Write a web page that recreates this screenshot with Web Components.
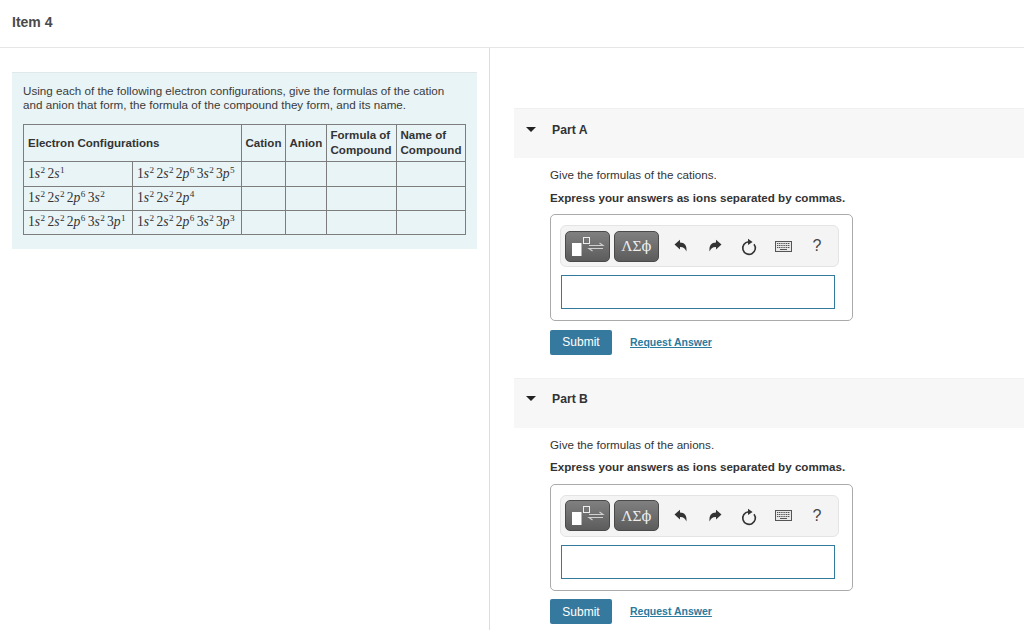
<!DOCTYPE html>
<html>
<head>
<meta charset="utf-8">
<title>Item 4</title>
<style>
	html, body {
		margin: 0;
		height: 630px;
		overflow: hidden;
		background: #fff;
		color: #333;
		font-family: "Liberation Sans", Arial, sans-serif;
	}
</style>
</head>
<body>
<item-page>
	<item-header slot="header">Item 4</item-header>
	<stem-panel slot="left">
		Using each of the following electron configurations, give the formulas of the cation and anion that form, the formula of the compound they form, and its name.
		<config-table slot="table"></config-table>
	</stem-panel>
	<answer-part slot="right" label="Part A" prompt="Give the formulas of the cations."></answer-part>
	<answer-part slot="right" label="Part B" prompt="Give the formulas of the anions."></answer-part>
</item-page>

<script>
class ItemPage extends HTMLElement {
	constructor() {
		super()
		this.attachShadow({mode:'open'})
		this.shadowRoot.innerHTML = /*html*/`
		<style>
			:host {
				display: block;
				height: 630px;
				overflow: hidden;
			}
			.columns {
				display: flex;
				height: 582px;
			}
			.left {
				box-sizing: border-box;
				border-right: solid 1px #ddd;
				flex: none;
				width: 490px;
				padding: 24px 12px 0;
			}
			.right {
				flex: 1;
				padding: 60px 0 0 24px;
				min-width: 0;
			}
		</style>
		<slot name="header"></slot>
		<div class="columns">
			<div class="left"><slot name="left"></slot></div>
			<div class="right"><slot name="right"></slot></div>
		</div>`
	}
}

class ItemHeader extends HTMLElement {
	constructor() {
		super()
		this.attachShadow({mode:'open'})
		this.shadowRoot.innerHTML = /*html*/`
		<style>
			:host {
				display: block;
				box-sizing: border-box;
				height: 48px;
				padding: 14px 0 0 12px;
				border-bottom: solid 1px #e6e6e6;
				font-size: 14px;
				line-height: 16px;
				font-weight: bold;
				color: #4a4a4a;
			}
		</style>
		<slot></slot>`
	}
}

class StemPanel extends HTMLElement {
	constructor() {
		super()
		this.attachShadow({mode:'open'})
		this.shadowRoot.innerHTML = /*html*/`
		<style>
			:host {
				display: block;
				box-sizing: border-box;
				width: 465px;
				height: 177px;
				padding: 10.5px 11px 0;
				background: #e9f4f7;
				border-top: solid 1px #e0e8ea;
				font-size: 11.65px;
				line-height: 14.5px;
				color: #3a3a3a;
			}
			.text {
				height: 40.5px;
				padding-right: 20px;
			}
		</style>
		<div class="text"><slot></slot></div>
		<slot name="table"></slot>`
	}
}

class ElectronConfig extends HTMLElement {
	constructor() {
		super()
		this.attachShadow({mode:'open'})
		let terms = this.getAttribute('value').split(' ').map(t => {
			let [, n, l, e] = t.match(/(\d)([a-z])(\d)/)
			return /*html*/`<span class="t">${n}<i>${l}</i><sup>${e}</sup></span>`
		}).join('')
		this.shadowRoot.innerHTML = /*html*/`
		<style>
			:host {
				display: inline-block;
				font-family: "Liberation Serif", "Times New Roman", serif;
				font-size: 13.6px;
				color: #333;
				white-space: nowrap;
			}
			.t {
				margin-right: 2.2px;
			}
			sup {
				font-size: 9.2px;
				line-height: 0;
				vertical-align: 4.8px;
				margin-left: .5px;
			}
		</style>
		${terms}`
	}
}

class ConfigTable extends HTMLElement {
	constructor() {
		super()
		this.attachShadow({mode:'open'})
		let rows = [
			['1s2 2s1', '1s2 2s2 2p6 3s2 3p5'],
			['1s2 2s2 2p6 3s2', '1s2 2s2 2p4'],
			['1s2 2s2 2p6 3s2 3p1', '1s2 2s2 2p6 3s2 3p3'],
		]
		this.shadowRoot.innerHTML = /*html*/`
		<style>
			:host {
				display: block;
			}
			table {
				border-collapse: collapse;
				table-layout: fixed;
				width: 442px;
				font-size: 11.55px;
				line-height: 14.6px;
				color: #333;
			}
			th, td {
				border: solid 1px #7d7d7d;
				padding: 0 4px;
				text-align: left;
				white-space: nowrap;
				overflow: hidden;
			}
			th + th {
				padding: 0 3px 0 3.5px;
			}
			.head { height: 37px; }
			.r1 { height: 25px; }
			.r2 { height: 24px; }
			.r3 { height: 24px; }
		</style>
		<table>
			<colgroup>
				<col style="width:109px"><col style="width:109px"><col style="width:44px">
				<col style="width:41px"><col style="width:70px"><col style="width:69px">
			</colgroup>
			<tr class="head">
				<th colspan="2">Electron Configurations</th>
				<th>Cation</th>
				<th>Anion</th>
				<th>Formula of<br>Compound</th>
				<th>Name of<br>Compound</th>
			</tr>
			${rows.map((r, i) => /*html*/`<tr class="r${i+1}">
				<td><electron-config value="${r[0]}"></electron-config></td>
				<td><electron-config value="${r[1]}"></electron-config></td>
				<td></td><td></td><td></td><td></td>
			</tr>`).join('')}
		</table>`
	}
}

class MathToolbar extends HTMLElement {
	constructor() {
		super()
		this.attachShadow({mode:'open'})
		this.shadowRoot.innerHTML = /*html*/`
		<style>
			:host {
				display: flex;
				align-items: center;
				box-sizing: border-box;
				width: 279px;
				height: 42px;
				padding: 0 4px;
				gap: 4px;
				background: #f4f4f4;
				border: solid 1px #e4e4e4;
				border-radius: 6px;
			}
			.btn {
				box-sizing: border-box;
				width: 45px;
				height: 31px;
				display: flex;
				align-items: center;
				justify-content: center;
				border: solid 1px #4a4a4a;
				border-radius: 5px;
				background: linear-gradient(#808080, #5c5c5c);
				color: #eee;
				font-family: "Liberation Serif", "Times New Roman", serif;
				font-size: 15.5px;
			}
			.btn .phi {
				font-family: "DejaVu Serif", serif;
				font-size: 14.5px;
			}
			.tools {
				display: flex;
				margin-left: 1.5px;
			}
			.tool {
				width: 34px;
				height: 30px;
				display: flex;
				align-items: center;
				justify-content: center;
				color: #444;
				font-size: 16px;
			}
			.reset svg {
				margin-top: 2px;
			}
		</style>
		<div class="btn">
			<svg width="43" height="29" viewBox="0 0 43 29">
				<rect x="6" y="11" width="9.5" height="13" fill="#fff"/>
				<rect x="17.5" y="5.5" width="6" height="6" fill="none" stroke="#eee"/>
				<path d="M23 13.5H37L33.5 11M37 16.5H23L26.5 19" fill="none" stroke="#d0d0d0" stroke-width="1.1"/>
			</svg>
		</div>
		<div class="btn"><span>ΛΣ<span class="phi">ϕ</span></span></div>
		<div class="tools">
			<div class="tool"><svg width="14" height="14" viewBox="0 0 14 14"><path d="M0.5 5.5 L6 0.8 V3.6 C10.5 3.6 13.2 6.5 12.4 12.6 C11.4 9.4 9.5 7.8 6 7.9 V10.5 Z" fill="#333"/></svg></div>
			<div class="tool"><svg width="14" height="14" viewBox="0 0 14 14"><path d="M13.5 5.5 L8 0.8 V3.6 C3.5 3.6 .8 6.5 1.6 12.6 C2.6 9.4 4.5 7.8 8 7.9 V10.5 Z" fill="#333"/></svg></div>
			<div class="tool reset"><svg width="16" height="18" viewBox="0 0 16 18"><path d="M13 6.2 A6.3 6.3 0 1 1 7.5 3.8" fill="none" stroke="#333" stroke-width="1.6"/><path d="M7 .8 L11.6 3.9 L7 7 Z" fill="#333"/></svg></div>
			<div class="tool"><svg width="17" height="11" viewBox="0 0 17 11"><rect x=".5" y=".5" width="16" height="10" fill="#e8e8e8" stroke="#555"/><path d="M2 2.5h13M2 4.5h13M2 6.5h13" stroke="#555" stroke-dasharray="1.2 .6"/><path d="M5 8.5h7" stroke="#555"/></svg></div>
			<div class="tool">?</div>
		</div>`
	}
}

class AnswerPart extends HTMLElement {
	constructor() {
		super()
		this.attachShadow({mode:'open'})
		this.shadowRoot.innerHTML = /*html*/`
		<style>
			:host {
				display: block;
				height: 269.5px;
				font-size: 11.63px;
				color: #333;
			}
			.head {
				box-sizing: border-box;
				height: 50px;
				display: flex;
				padding: 13.5px 0 0 12px;
				gap: 16px;
				background: #f7f7f7;
				border-top: solid 1px #f0f0f0;
				font-weight: bold;
				font-size: 12.2px;
				line-height: 14px;
			}
			.caret {
				width: 0;
				height: 0;
				margin-top: 4px;
				border: solid 5px transparent;
				border-top: solid 5px #222;
				border-bottom: 0;
			}
			.body {
				padding: 0 0 0 36px;
			}
			.prompt {
				padding-top: 10px;
				line-height: 14px;
				height: 14px;
			}
			.ask {
				padding-top: 8.6px;
				height: 14px;
				line-height: 14px;
				font-weight: bold;
				white-space: nowrap;
			}
			.box {
				box-sizing: border-box;
				width: 303px;
				height: 107px;
				margin-top: 9.5px;
				padding: 10px 0 0 9px;
				border: solid 1px #aaa;
				border-radius: 5px;
			}
			.input {
				box-sizing: border-box;
				width: 274px;
				height: 34px;
				margin: 8px 0 0 1px;
				border: solid 1px #337a9c;
			}
			.actions {
				display: flex;
				align-items: center;
				gap: 18px;
				margin-top: 8.5px;
			}
			.submit {
				box-sizing: border-box;
				width: 62px;
				height: 25px;
				display: flex;
				align-items: center;
				justify-content: center;
				background: #357a9e;
				border-radius: 2px;
				color: #fff;
				font-size: 12px;
			}
			.link {
				color: #2a7a9e;
				font-weight: bold;
				font-size: 10.5px;
				text-decoration: underline;
				margin-top: -1px;
			}
		</style>
		<div class="head"><span class="caret"></span><span class="label"></span></div>
		<div class="body">
			<div class="prompt"></div>
			<div class="ask">Express your answers as ions separated by commas.</div>
			<div class="box">
				<math-toolbar></math-toolbar>
				<div class="input"></div>
			</div>
			<div class="actions">
				<div class="submit">Submit</div>
				<div class="link">Request Answer</div>
			</div>
		</div>`
		this.shadowRoot.querySelector('.label').textContent = this.getAttribute('label')
		this.shadowRoot.querySelector('.prompt').textContent = this.getAttribute('prompt')
	}
}

customElements.define('electron-config', ElectronConfig)
customElements.define('config-table', ConfigTable)
customElements.define('math-toolbar', MathToolbar)
customElements.define('answer-part', AnswerPart)
customElements.define('stem-panel', StemPanel)
customElements.define('item-header', ItemHeader)
customElements.define('item-page', ItemPage)
</script>
</body>
</html>
